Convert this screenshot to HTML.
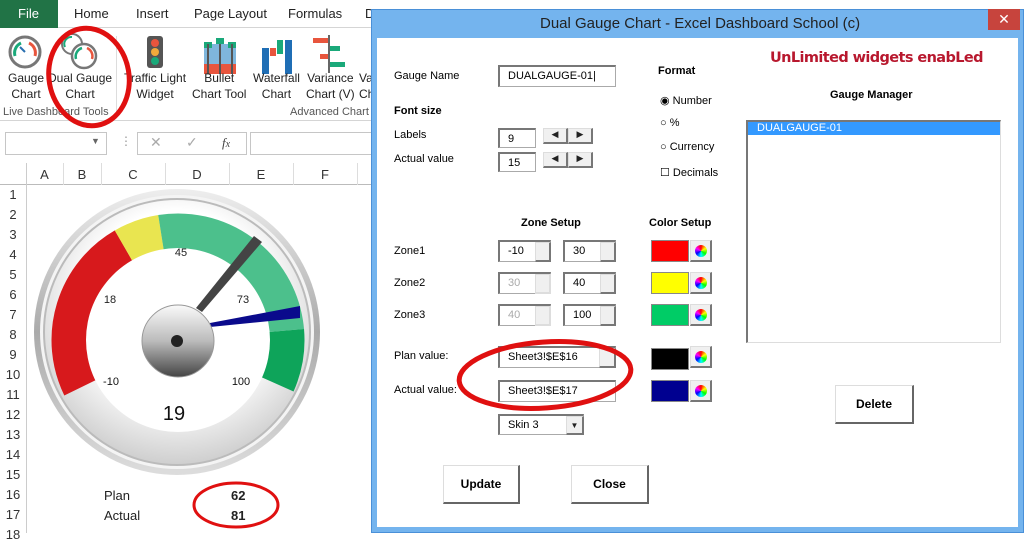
<!DOCTYPE html>
<html><head><meta charset="utf-8"><style>
*{margin:0;padding:0;box-sizing:border-box}
body{width:1024px;height:533px;overflow:hidden;background:#fff;font-family:"Liberation Sans",sans-serif;position:relative;font-size:12px;color:#222}
.a{position:absolute}
.t{position:absolute;white-space:nowrap}
.lbl{font-size:11px;color:#000}
.b{font-weight:bold}
.inp{position:absolute;background:#fff;border:1px solid #aaa;border-top:2px solid #777;border-left:2px solid #777;font-size:11px;padding-left:8px;line-height:18px;color:#000}
.sb{position:absolute;background:#f0f0f0;border-right:2px solid #777;border-bottom:2px solid #777;border-top:1px solid #ddd;border-left:1px solid #ddd}
.btn{position:absolute;background:#fff;border:1px solid #ddd;border-right:2px solid #666;border-bottom:2px solid #666;font-weight:bold;font-size:12px;text-align:center;color:#000}
.rh{position:absolute;left:0;width:26px;text-align:center;font-size:13px;color:#333}
.ch{position:absolute;top:167px;font-size:13px;color:#333;text-align:center}
.cw{position:absolute;width:22px;height:22px;background:#f0f0f0;border-right:2px solid #777;border-bottom:2px solid #777;border-top:1px solid #ddd;border-left:1px solid #ddd}
.cw:after{content:"";position:absolute;left:4px;top:4px;width:12px;height:12px;border-radius:50%;background:conic-gradient(red,yellow,lime,cyan,blue,magenta,red)}
</style></head><body>
<div class="a" style="left:0;top:0;width:1024px;height:28px;background:#fff;border-bottom:1px solid #d5d5d5"></div>
<div class="a" style="left:0;top:0;width:58px;height:28px;background:#217346"></div>
<div class="t" style="left:18px;top:6px;color:#fff;font-size:13px">File</div>
<div class="t" style="left:74px;top:6px;font-size:13px">Home</div>
<div class="t" style="left:136px;top:6px;font-size:13px">Insert</div>
<div class="t" style="left:194px;top:6px;font-size:13px">Page Layout</div>
<div class="t" style="left:288px;top:6px;font-size:13px">Formulas</div>
<div class="t" style="left:365px;top:6px;font-size:13px">D</div>
<div class="a" style="left:0;top:120px;width:1024px;height:1px;background:#d5d5d5"></div>
<svg class="a" style="left:0;top:28px" width="372" height="50">
 <g transform="translate(25,24)"><circle r="15" fill="#fff" stroke="#777" stroke-width="3"/><path d="M-10,4 A11,11 0 0 1 -4,-9" stroke="#1aa97a" stroke-width="3" fill="none"/><path d="M4,-9 A11,11 0 0 1 10,4" stroke="#e8553d" stroke-width="3" fill="none"/><line x1="0" y1="0" x2="-5" y2="-5" stroke="#2a6fb0" stroke-width="2"/></g>
 <g transform="translate(72,16)"><circle r="10" fill="#fff" stroke="#777" stroke-width="2"/><path d="M-7,3 A7,7 0 0 1 0,-7" stroke="#1aa97a" stroke-width="2" fill="none"/></g>
 <g transform="translate(84,28)"><circle r="12" fill="#fff" stroke="#777" stroke-width="2.5"/><path d="M-8,3 A9,9 0 0 1 -2,-8" stroke="#1aa97a" stroke-width="2.5" fill="none"/><path d="M3,-8 A9,9 0 0 1 8,3" stroke="#e8553d" stroke-width="2.5" fill="none"/></g>
 <rect x="147" y="8" width="16" height="32" rx="3" fill="#555"/><circle cx="155" cy="15" r="4" fill="#e8553d"/><circle cx="155" cy="24" r="4" fill="#f2a93b"/><circle cx="155" cy="33" r="4" fill="#1aa97a"/>
 <rect x="204" y="16" width="32" height="20" fill="#7fb6dc"/><rect x="204" y="36" width="32" height="10" fill="#e8553d"/><rect x="204" y="14" width="8" height="6" fill="#1aa97a"/><rect x="216" y="10" width="8" height="6" fill="#1aa97a"/><rect x="228" y="14" width="8" height="6" fill="#1aa97a"/><rect x="207" y="16" width="2" height="30" fill="#555"/><rect x="219" y="16" width="2" height="30" fill="#555"/><rect x="231" y="16" width="2" height="30" fill="#555"/>
 <rect x="262" y="20" width="7" height="26" fill="#1f6eb5"/><rect x="270" y="20" width="6" height="8" fill="#e8553d"/><rect x="277" y="12" width="6" height="14" fill="#1aa97a"/><rect x="285" y="12" width="7" height="34" fill="#1f6eb5"/>
 <rect x="328" y="7" width="2" height="38" fill="#666"/><rect x="313" y="10" width="15" height="5" fill="#e8553d"/><rect x="330" y="18" width="10" height="5" fill="#1aa97a"/><rect x="320" y="26" width="8" height="5" fill="#e8553d"/><rect x="330" y="34" width="15" height="5" fill="#1aa97a"/>
</svg>
<div class="t" style="left:8px;top:70px;font-size:12px;line-height:16px;text-align:center">Gauge<br>Chart</div>
<div class="t" style="left:48px;top:70px;font-size:12px;line-height:16px;text-align:center">Dual Gauge<br>Chart</div>
<div class="t" style="left:124px;top:70px;font-size:12px;line-height:16px;text-align:center">Traffic Light<br>Widget</div>
<div class="t" style="left:192px;top:70px;font-size:12px;line-height:16px;text-align:center">Bullet<br>Chart Tool</div>
<div class="t" style="left:253px;top:70px;font-size:12px;line-height:16px;text-align:center">Waterfall<br>Chart</div>
<div class="t" style="left:306px;top:70px;font-size:12px;line-height:16px;text-align:center">Variance<br>Chart (V)</div>
<div class="t" style="left:359px;top:70px;font-size:12px;line-height:16px">Va<br>Ch</div>
<div class="t" style="left:3px;top:106px;font-size:11px;color:#555">Live Dashboard Tools</div>
<div class="t" style="left:290px;top:106px;font-size:11px;color:#555">Advanced Chart</div>
<div class="a" style="left:116px;top:36px;width:1px;height:80px;background:#ddd"></div>
<div class="a" style="left:5px;top:132px;width:102px;height:23px;border:1px solid #c6c6c6"></div>
<div class="t" style="left:91px;top:136px;font-size:9px;color:#666">▼</div>
<div class="t" style="left:120px;top:134px;color:#999">⋮</div>
<div class="a" style="left:137px;top:132px;width:110px;height:23px;border:1px solid #c6c6c6"></div>
<div class="t" style="left:150px;top:134px;color:#aaa;font-size:14px">✕</div>
<div class="t" style="left:186px;top:134px;color:#aaa;font-size:14px">✓</div>
<div class="t" style="left:222px;top:135px;color:#444;font-style:italic;font-family:'Liberation Serif',serif;font-size:13px">f<span style="font-size:10px">x</span></div>
<div class="a" style="left:250px;top:132px;width:130px;height:23px;border:1px solid #c6c6c6"></div>
<div class="a" style="left:0;top:163px;width:380px;height:22px;background:#fff;border-bottom:1px solid #bbb"></div>
<div class="a" style="left:26px;top:163px;width:1px;height:370px;background:#ccc"></div>
<div class="a" style="left:63px;top:163px;width:1px;height:22px;background:#ddd"></div>
<div class="a" style="left:101px;top:163px;width:1px;height:22px;background:#ddd"></div>
<div class="a" style="left:165px;top:163px;width:1px;height:22px;background:#ddd"></div>
<div class="a" style="left:229px;top:163px;width:1px;height:22px;background:#ddd"></div>
<div class="a" style="left:293px;top:163px;width:1px;height:22px;background:#ddd"></div>
<div class="a" style="left:357px;top:163px;width:1px;height:22px;background:#ddd"></div>
<div class="ch" style="left:26px;width:37px">A</div><div class="ch" style="left:63px;width:38px">B</div><div class="ch" style="left:101px;width:64px">C</div><div class="ch" style="left:165px;width:64px">D</div><div class="ch" style="left:229px;width:64px">E</div><div class="ch" style="left:293px;width:64px">F</div>
<div class="rh" style="top:187px">1</div><div class="rh" style="top:207px">2</div><div class="rh" style="top:227px">3</div><div class="rh" style="top:247px">4</div><div class="rh" style="top:267px">5</div><div class="rh" style="top:287px">6</div><div class="rh" style="top:307px">7</div><div class="rh" style="top:327px">8</div><div class="rh" style="top:347px">9</div><div class="rh" style="top:367px">10</div><div class="rh" style="top:387px">11</div><div class="rh" style="top:407px">12</div><div class="rh" style="top:427px">13</div><div class="rh" style="top:447px">14</div><div class="rh" style="top:467px">15</div><div class="rh" style="top:487px">16</div><div class="rh" style="top:507px">17</div><div class="rh" style="top:527px">18</div>
<svg class="a" style="left:0;top:0" width="372" height="533">
 <defs>
  <radialGradient id="face" cx="0.5" cy="0.4" r="0.6"><stop offset="0.6" stop-color="#fff"/><stop offset="1" stop-color="#cfcfcf"/></radialGradient>
  <linearGradient id="ring" x1="0" y1="0" x2="0" y2="1"><stop offset="0" stop-color="#eee"/><stop offset="0.5" stop-color="#aaa"/><stop offset="1" stop-color="#ddd"/></linearGradient>
  <linearGradient id="hub" x1="0" y1="0" x2="0" y2="1"><stop offset="0" stop-color="#fafafa"/><stop offset="0.5" stop-color="#bbb"/><stop offset="1" stop-color="#444"/></linearGradient>
 </defs>
 <circle cx="177" cy="332" r="143" fill="url(#ring)"/>
 <circle cx="177" cy="332" r="137" fill="#f4f4f4"/>
 <circle cx="177" cy="332" r="134" fill="#bbb"/>
 <circle cx="177" cy="332" r="132" fill="url(#face)"/>
 <g transform="translate(178,340)">
  <circle r="109" fill="none" stroke="#d7191c" stroke-width="35" stroke-dasharray="163.6 800" transform="rotate(154)"/>
  <circle r="109" fill="none" stroke="#e9e550" stroke-width="35" stroke-dasharray="40 800" transform="rotate(240)"/>
  <circle r="109" fill="none" stroke="#4cc08c" stroke-width="35" stroke-dasharray="178.8 800" transform="rotate(261)"/>
  <circle r="109" fill="none" stroke="#0ea45a" stroke-width="35" stroke-dasharray="55.2 800" transform="rotate(355)"/>
  <circle r="92" fill="#fff"/>
 </g>
 <polygon points="196,308 254,236 262,242 202,312" fill="#444"/>
 <polygon points="210,323 300,306 300,318 210,327" fill="#0a0a8c"/>
 <circle cx="178" cy="341" r="36" fill="url(#hub)" stroke="#999"/>
 <circle cx="177" cy="341" r="6" fill="#222"/>
 <text x="181" y="256" font-size="11" text-anchor="middle" fill="#222" font-family="Liberation Sans">45</text>
 <text x="110" y="303" font-size="11" text-anchor="middle" fill="#222" font-family="Liberation Sans">18</text>
 <text x="243" y="303" font-size="11" text-anchor="middle" fill="#222" font-family="Liberation Sans">73</text>
 <text x="111" y="385" font-size="11" text-anchor="middle" fill="#111" font-family="Liberation Sans">-10</text>
 <text x="241" y="385" font-size="11" text-anchor="middle" fill="#111" font-family="Liberation Sans">100</text>
 <text x="174" y="420" font-size="20" text-anchor="middle" fill="#111" font-family="Liberation Sans">19</text>
 <ellipse cx="89" cy="77" rx="40" ry="49" fill="none" stroke="#e01010" stroke-width="5" transform="rotate(-10 89 77)"/>
 <ellipse cx="236" cy="505" rx="42" ry="22" fill="none" stroke="#e01010" stroke-width="3"/>
</svg>
<div class="t" style="left:104px;top:488px;font-size:13px">Plan</div>
<div class="t" style="left:104px;top:508px;font-size:13px">Actual</div>
<div class="t b" style="left:231px;top:488px;font-size:13px">62</div>
<div class="t b" style="left:231px;top:508px;font-size:13px">81</div>
<div class="a" style="left:371px;top:9px;width:653px;height:524px;background:#74b4ee;border:1px solid #4a90d8"></div>
<div class="t" style="left:540px;top:15px;font-size:15px;color:#222">Dual Gauge Chart - Excel Dashboard School (c)</div>
<div class="a" style="left:988px;top:9px;width:32px;height:21px;background:#c7443d;color:#fff;text-align:center;font-size:14px;line-height:21px">✕</div>
<div class="a" style="left:377px;top:38px;width:641px;height:489px;background:#fff"></div>
<div class="t lbl" style="left:394px;top:70px">Gauge Name</div>
<div class="inp" style="left:498px;top:65px;width:118px;height:22px">DUALGAUGE-01|</div>
<div class="t b lbl" style="left:394px;top:105px">Font size</div>
<div class="t lbl" style="left:394px;top:129px">Labels</div>
<div class="inp" style="left:498px;top:128px;width:38px;height:20px">9</div>
<div class="sb" style="left:543px;top:128px;width:25px;height:16px;font-size:9px;text-align:center">◀</div>
<div class="sb" style="left:568px;top:128px;width:25px;height:16px;font-size:9px;text-align:center">▶</div>
<div class="t lbl" style="left:394px;top:153px">Actual value</div>
<div class="inp" style="left:498px;top:152px;width:38px;height:20px">15</div>
<div class="sb" style="left:543px;top:152px;width:25px;height:16px;font-size:9px;text-align:center">◀</div>
<div class="sb" style="left:568px;top:152px;width:25px;height:16px;font-size:9px;text-align:center">▶</div>
<div class="t b lbl" style="left:658px;top:65px">Format</div>
<div class="t lbl" style="left:660px;top:94px">◉ Number</div>
<div class="t lbl" style="left:660px;top:117px">○ %</div>
<div class="t lbl" style="left:660px;top:141px">○ Currency</div>
<div class="t lbl" style="left:660px;top:166px">☐ Decimals</div>
<div class="t" style="left:770px;top:50px;font-size:14.5px;font-weight:bold;color:#b8182e;font-family:'DejaVu Sans',sans-serif;letter-spacing:-0.6px">UnLimited widgets enabLed</div>
<div class="t b lbl" style="left:830px;top:89px">Gauge Manager</div>
<div class="a" style="left:746px;top:120px;width:255px;height:223px;border:1px solid #ddd;border-left:2px solid #777;border-top:2px solid #777"></div>
<div class="a" style="left:748px;top:122px;width:252px;height:13px;background:#3399ff;color:#fff;font-size:11px;padding-left:9px;line-height:13px">DUALGAUGE-01</div>
<div class="t b lbl" style="left:521px;top:217px">Zone Setup</div>
<div class="t b lbl" style="left:649px;top:217px">Color Setup</div>
<div class="t lbl" style="left:394px;top:245px">Zone1</div>
<div class="t lbl" style="left:394px;top:277px">Zone2</div>
<div class="t lbl" style="left:394px;top:309px">Zone3</div>
<div class="inp" style="left:498px;top:240px;width:53px;height:22px">-10</div>
<div class="inp" style="left:563px;top:240px;width:53px;height:22px">30</div>
<div class="inp" style="left:498px;top:272px;width:53px;height:22px;color:#aaa">30</div>
<div class="inp" style="left:563px;top:272px;width:53px;height:22px">40</div>
<div class="inp" style="left:498px;top:304px;width:53px;height:22px;color:#aaa">40</div>
<div class="inp" style="left:563px;top:304px;width:53px;height:22px">100</div>
<div class="sb" style="left:535px;top:242px;width:16px;height:20px"></div>
<div class="sb" style="left:600px;top:242px;width:16px;height:20px"></div>
<div class="sb" style="left:535px;top:274px;width:16px;height:20px;border-color:#ddd"></div>
<div class="sb" style="left:600px;top:274px;width:16px;height:20px"></div>
<div class="sb" style="left:535px;top:306px;width:16px;height:20px;border-color:#ddd"></div>
<div class="sb" style="left:600px;top:306px;width:16px;height:20px"></div>
<div class="a" style="left:651px;top:240px;width:38px;height:22px;background:#f00;border:1px solid #888"></div>
<div class="a" style="left:651px;top:272px;width:38px;height:22px;background:#ff0;border:1px solid #888"></div>
<div class="a" style="left:651px;top:304px;width:38px;height:22px;background:#00cc66;border:1px solid #888"></div>
<div class="a" style="left:651px;top:348px;width:38px;height:22px;background:#000;border:1px solid #888"></div>
<div class="a" style="left:651px;top:380px;width:38px;height:22px;background:#000090;border:1px solid #888"></div>
<div class="cw" style="left:690px;top:240px"></div><div class="cw" style="left:690px;top:272px"></div><div class="cw" style="left:690px;top:304px"></div><div class="cw" style="left:690px;top:346px"></div><div class="cw" style="left:690px;top:380px"></div>
<div class="t lbl" style="left:394px;top:350px">Plan value:</div>
<div class="t lbl" style="left:394px;top:384px">Actual value:</div>
<div class="inp" style="left:498px;top:346px;width:118px;height:22px">Sheet3!$E$16</div>
<div class="sb" style="left:599px;top:348px;width:17px;height:20px"></div>
<div class="inp" style="left:498px;top:380px;width:118px;height:22px">Sheet3!$E$17</div>
<div class="inp" style="left:498px;top:414px;width:86px;height:21px">Skin 3</div>
<div class="sb" style="left:566px;top:416px;width:18px;height:19px;font-size:8px;text-align:center;line-height:17px">▼</div>
<svg class="a" style="left:455px;top:335px" width="180" height="80"><ellipse cx="90" cy="40" rx="86" ry="33" fill="none" stroke="#e01010" stroke-width="5" transform="rotate(-4 90 40)"/></svg>
<div class="btn" style="left:443px;top:465px;width:77px;height:39px;line-height:36px">Update</div>
<div class="btn" style="left:571px;top:465px;width:78px;height:39px;line-height:36px">Close</div>
<div class="btn" style="left:835px;top:385px;width:79px;height:39px;line-height:36px">Delete</div>
</body></html>
